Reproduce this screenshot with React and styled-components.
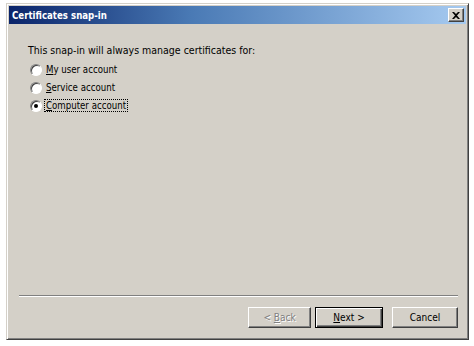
import React from "react";
import styled, { createGlobalStyle } from "styled-components";

const Global = createGlobalStyle`
  html, body {
    margin: 0;
    background: #fff;
  }
  body {
    font-family: Tahoma, "DejaVu Sans", "Liberation Sans", sans-serif;
    font-size: 11px;
  }
`;

const Page = styled.div`
  width: 474px;
  height: 346px;
  padding: 3px 0 0 6px;
  box-sizing: border-box;
`;

const Window = styled.div`
  width: 463px;
  height: 337px;
  box-sizing: border-box;
  background: #d4d0c8;
  border: 1px solid;
  border-color: #d4d0c8 #404040 #404040 #d4d0c8;
  box-shadow: inset 1px 1px #fff, inset -1px -1px #808080;
  padding: 2px;
  display: flex;
  flex-direction: column;
`;

const TitleBar = styled.div`
  height: 18px;
  display: flex;
  align-items: center;
  justify-content: space-between;
  padding: 0 2px 0 3px;
  background: linear-gradient(to right, #0a246a 0%, #4a7ab5 40%, #a6caf0 100%);
`;

const Title = styled.span`
  color: #fff;
  font-weight: bold;
  font-size: 9.6px;
  font-family: "DejaVu Sans Condensed", "DejaVu Sans", sans-serif;
`;

const CloseButton = styled.div`
  width: 16px;
  height: 14px;
  box-sizing: border-box;
  background: #d4d0c8;
  border: 1px solid;
  border-color: #fff #404040 #404040 #fff;
  box-shadow: inset -1px -1px #808080;
  display: flex;
  align-items: center;
  justify-content: center;
`;

const Body = styled.div`
  flex: 1;
  padding: 20px 0 0 19px;
  color: #000;
`;

const Prompt = styled.div`
  margin-bottom: 7px;
  font-family: "DejaVu Sans Condensed", "DejaVu Sans", sans-serif;
  font-size: 10.5px;
`;

const Options = styled.div`
  display: flex;
  flex-direction: column;
  gap: 5px;
  padding-left: 2px;
`;

const Option = styled.label`
  display: flex;
  align-items: center;
  gap: 3px;
  height: 13px;
  font-family: "DejaVu Sans Condensed", "DejaVu Sans", sans-serif;
  font-size: 9.6px;
`;

const Radio = styled.span`
  width: 12px;
  height: 12px;
  box-sizing: border-box;
  border-radius: 50%;
  background: #fff;
  border: 1px solid;
  border-color: #808080 #fff #fff #808080;
  box-shadow: inset 1px 1px #404040;
  display: flex;
  align-items: center;
  justify-content: center;
  &::after {
    content: "";
    width: 4px;
    height: 4px;
    border-radius: 50%;
    background: ${(p) => (p.$checked ? "#000" : "transparent")};
  }
`;

const Label = styled.span`
  padding: 0 1px;
  outline: ${(p) => (p.$focused ? "1px dotted #000" : "none")};
`;

const Footer = styled.div`
  padding: 0 8px 9px 10px;
`;

const Separator = styled.div`
  height: 0;
  border-top: 1px solid #808080;
  border-bottom: 1px solid #fff;
  margin-bottom: 10px;
`;

const Buttons = styled.div`
  display: flex;
  justify-content: flex-end;
  gap: 4px;
`;

const Button = styled.button`
  width: ${(p) => p.$w || 63}px;
  height: 21px;
  box-sizing: border-box;
  background: #d4d0c8;
  font-family: "DejaVu Sans Condensed", "DejaVu Sans", sans-serif;
  font-size: 10px;
  color: ${(p) => (p.disabled ? "#808080" : "#000")};
  text-shadow: ${(p) => (p.disabled ? "1px 1px #fff" : "none")};
  border: 1px solid;
  border-color: ${(p) => (p.$default ? "#000" : "#fff #404040 #404040 #fff")};
  box-shadow: ${(p) =>
    p.$default
      ? "inset 1px 1px #fff, inset -1px -1px #404040, inset -2px -2px #808080"
      : "inset -1px -1px #808080"};
  padding: 0;
  margin-left: ${(p) => p.$gap || 0}px;
`;

export default function App() {
  return (
    <>
      <Global />
      <Page>
        <Window>
          <TitleBar>
            <Title>Certificates snap-in</Title>
            <CloseButton>
              <svg width="8" height="7" viewBox="0 0 8 7">
                <path d="M0 0h2l2 2 2-2h2L5 3.5 8 7H6L4 5 2 7H0l3-3.5z" fill="#000" />
              </svg>
            </CloseButton>
          </TitleBar>
          <Body>
            <Prompt>This snap-in will always manage certificates for:</Prompt>
            <Options>
              <Option>
                <Radio />
                <Label>
                  <u>M</u>y user account
                </Label>
              </Option>
              <Option>
                <Radio />
                <Label>
                  <u>S</u>ervice account
                </Label>
              </Option>
              <Option>
                <Radio $checked />
                <Label $focused>
                  <u>C</u>omputer account
                </Label>
              </Option>
            </Options>
          </Body>
          <Footer>
            <Separator />
            <Buttons>
              <Button disabled $w={63}>
                &lt; <u>B</u>ack
              </Button>
              <Button $default $w={68}>
                <u>N</u>ext &gt;
              </Button>
              <Button $w={66} $gap={5}>
                Cancel
              </Button>
            </Buttons>
          </Footer>
        </Window>
      </Page>
    </>
  );
}
